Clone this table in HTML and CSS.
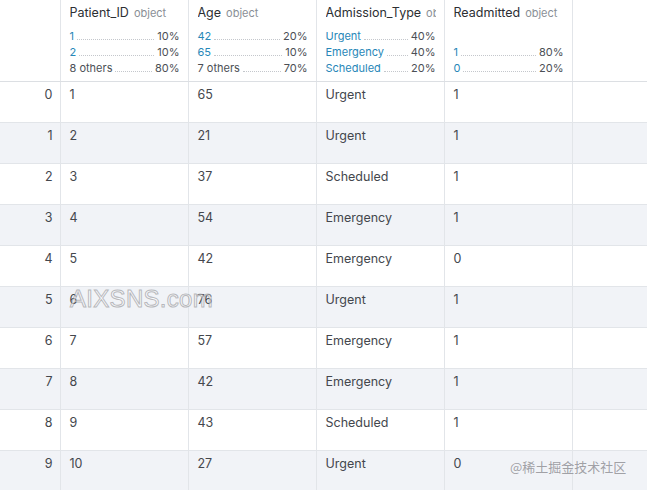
FILE: index.html
```html
<!DOCTYPE html>
<html>
<head>
<meta charset="utf-8">
<link rel="stylesheet" href="styles.css">
</head>
<body>
<div class="wrap">
<table class="grid">
  <colgroup>
    <col class="c-idx"><col class="c-col"><col class="c-col"><col class="c-col"><col class="c-col"><col class="c-rest">
  </colgroup>
  <thead>
    <tr>
      <th class="idx"></th>
      <th>
        <div class="hname"><span class="nm">Patient_ID</span><span class="ty">object</span></div>
        <div class="stat"><span class="v">1</span><span class="dots"></span><span class="p">10%</span></div>
        <div class="stat"><span class="v">2</span><span class="dots"></span><span class="p">10%</span></div>
        <div class="stat"><span class="o">8 others</span><span class="dots"></span><span class="p">80%</span></div>
      </th>
      <th>
        <div class="hname"><span class="nm">Age</span><span class="ty">object</span></div>
        <div class="stat"><span class="v">42</span><span class="dots"></span><span class="p">20%</span></div>
        <div class="stat"><span class="v">65</span><span class="dots"></span><span class="p">10%</span></div>
        <div class="stat"><span class="o">7 others</span><span class="dots"></span><span class="p">70%</span></div>
      </th>
      <th>
        <div class="hname"><span class="nm">Admission_Type</span><span class="ty">object</span></div>
        <div class="stat"><span class="v">Urgent</span><span class="dots"></span><span class="p">40%</span></div>
        <div class="stat"><span class="v">Emergency</span><span class="dots"></span><span class="p">40%</span></div>
        <div class="stat"><span class="v">Scheduled</span><span class="dots"></span><span class="p">20%</span></div>
      </th>
      <th>
        <div class="hname"><span class="nm">Readmitted</span><span class="ty">object</span></div>
        <div class="stat empty"></div>
        <div class="stat"><span class="v">1</span><span class="dots"></span><span class="p">80%</span></div>
        <div class="stat"><span class="v">0</span><span class="dots"></span><span class="p">20%</span></div>
      </th>
      <th class="rest"></th>
    </tr>
  </thead>
  <tbody>
    <tr><td class="idx">0</td><td>1</td><td>65</td><td>Urgent</td><td>1</td><td></td></tr>
    <tr><td class="idx">1</td><td>2</td><td>21</td><td>Urgent</td><td>1</td><td></td></tr>
    <tr><td class="idx">2</td><td>3</td><td>37</td><td>Scheduled</td><td>1</td><td></td></tr>
    <tr><td class="idx">3</td><td>4</td><td>54</td><td>Emergency</td><td>1</td><td></td></tr>
    <tr><td class="idx">4</td><td>5</td><td>42</td><td>Emergency</td><td>0</td><td></td></tr>
    <tr><td class="idx">5</td><td>6</td><td>76</td><td>Urgent</td><td>1</td><td></td></tr>
    <tr><td class="idx">6</td><td>7</td><td>57</td><td>Emergency</td><td>1</td><td></td></tr>
    <tr><td class="idx">7</td><td>8</td><td>42</td><td>Emergency</td><td>1</td><td></td></tr>
    <tr><td class="idx">8</td><td>9</td><td>43</td><td>Scheduled</td><td>1</td><td></td></tr>
    <tr><td class="idx">9</td><td>10</td><td>27</td><td>Urgent</td><td>0</td><td></td></tr>
  </tbody>
</table>
<div class="wm-big">AIXSNS.com</div>
<div class="wm-small">@稀土掘金技术社区</div>
</div>
</body>
</html>
```

FILE: styles.css
```css
html, body {
  margin: 0;
  padding: 0;
  background: #ffffff;
  overflow: hidden;
}
.wrap {
  position: relative;
  width: 647px;
  height: 490px;
  overflow: hidden;
  font-family: Inter, "Noto Sans", sans-serif;
  color: #3d4046;
}
.grid {
  border-collapse: collapse;
  table-layout: fixed;
  width: 647px;
}
.c-idx { width: 60px; }
.c-col { width: 128px; }
.c-rest { width: 75px; }
.grid th, .grid td {
  border-right: 1px solid #e2e5e9;
  border-bottom: 1px solid #e2e5e9;
  padding: 0;
  overflow: hidden;
  white-space: nowrap;
  box-sizing: border-box;
}
.grid th {
  height: 81px;
  vertical-align: top;
  text-align: left;
  font-weight: normal;
  padding: 4px 8px 0 9px;
  border-bottom: 1px solid #dcdfe3;
}
.grid th.idx, .grid th.rest { padding: 0; }
.hname {
  display: flex;
  align-items: baseline;
  gap: 5px;
  height: 18px;
  line-height: 18px;
  margin-bottom: 6px;
  overflow: hidden;
}
.nm {
  font-size: 12.5px;
  color: #2c2f33;
}
.ty {
  font-size: 11px;
  color: #8a8f96;
}
.stat {
  display: flex;
  align-items: baseline;
  height: 16px;
  line-height: 16px;
  font-size: 11px;
  gap: 3px;
}
.stat .v { color: #2787b8; }
.stat .o { color: #4b4f55; }
.stat .p { color: #4b4f55; }
.dots {
  flex: 1;
  border-bottom: 1px dotted #c4c7cc;
  height: 0;
  margin-bottom: 2px;
}
.grid td {
  height: 41px;
  vertical-align: top;
  font-size: 12.5px;
  line-height: 16px;
  padding: 5px 8px 0 9px;
  color: #44474d;
}
.grid td.idx {
  text-align: right;
  padding-right: 7px;
}
.grid tbody tr:nth-child(even) td {
  background: #f1f3f7;
}
.wm-big {
  position: absolute;
  left: 70px;
  top: 285px;
  font-family: "Liberation Sans", Arial, sans-serif;
  font-size: 24px;
  letter-spacing: 0.3px;
  color: rgba(255, 255, 255, 0.55);
  -webkit-text-stroke: 1px rgba(120, 120, 125, 0.5);
}
.wm-small {
  position: absolute;
  left: 510px;
  top: 457px;
  font-family: "Noto Sans CJK SC", sans-serif;
  font-size: 13px;
  color: rgba(150, 150, 155, 0.9);
}
```
